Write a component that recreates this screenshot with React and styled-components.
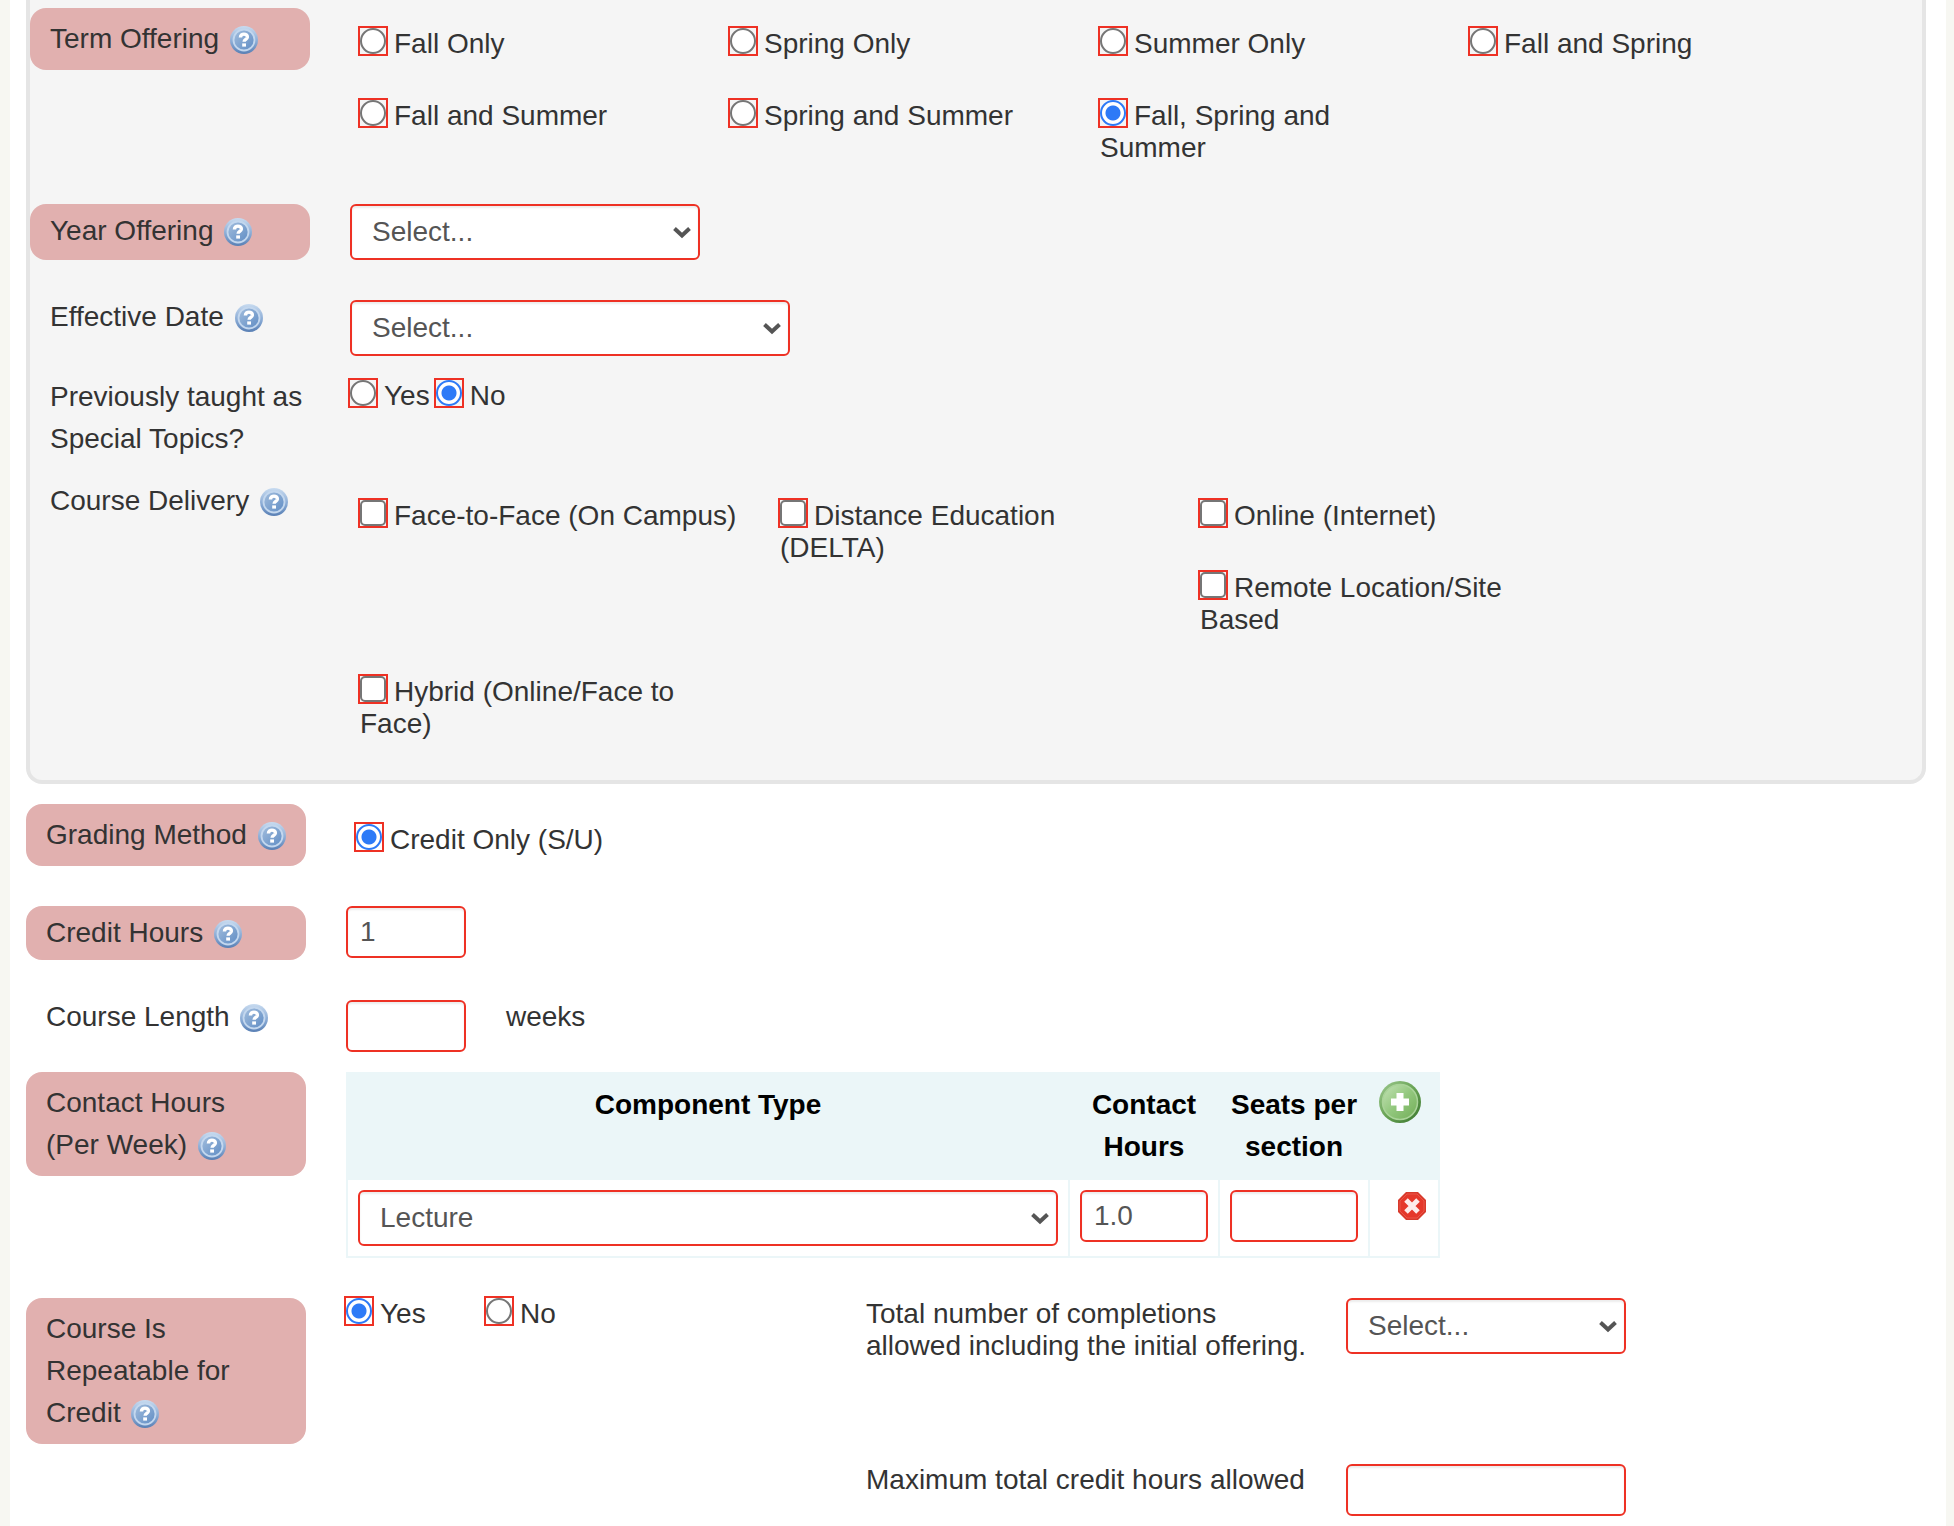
import React from 'react';
import styled, { createGlobalStyle } from 'styled-components';

const GlobalStyle = createGlobalStyle`
  *,
  *::before {
    box-sizing: border-box;
  }

  body {
    margin: 0;
    background: #f7f7f2;
    color: #333;
    font-family: 'Liberation Sans', Arial, sans-serif;
    font-size: 28px;
    line-height: 42px;
  }

  input,
  select,
  button {
    font: inherit;
  }
`;

const Page = styled.main`
  min-height: 100vh;
  margin: 0 8px 0 10px;
  padding: 0 20px 10px 16px;
  background: #fff;
`;

const Panel = styled.section`
  padding-top: 8px;
  border: 4px solid #e5e5e5;
  border-top: none;
  border-radius: 0 0 16px 16px;
  background: #f5f5f5;
`;

const Row = styled.div`
  display: grid;
  grid-template-columns: 280px 1fr;
  column-gap: 40px;
  align-items: start;
  margin-top: ${({ $gap = 0 }) => $gap}px;
`;

const Caption = styled.div`
  padding: 0 0 0 20px;
`;

const RequiredCaption = styled(Caption)`
  align-self: ${({ $compact }) => ($compact ? 'stretch' : 'start')};
  padding-top: ${({ $compact }) => ($compact ? 6 : 10)}px;
  padding-bottom: ${({ $compact }) => ($compact ? 6 : 10)}px;
  border-radius: 16px;
  background: #e1b0af;
`;

const IconButton = styled.button`
  padding: 0;
  border: none;
  background: none;
  line-height: 0;
  cursor: pointer;

  svg {
    display: block;
  }
`;

const HelpButton = styled(IconButton)`
  display: inline-block;
  margin-left: 1px;
  vertical-align: -8px;
`;

// the red frame hangs 2px outside the control, so text lines up with the control itself
const Tick = styled.input`
  appearance: none;
  width: 30px;
  height: 30px;
  margin: -2px 6px -2px -2px;
  padding: 0;
  border: 2px solid #ee3124;
  vertical-align: top;

  &::before {
    content: '';
    display: block;
    width: 26px;
    height: 26px;
    border: 2px solid #767676;
    border-radius: ${({ type }) => (type === 'radio' ? '50%' : '5px')};
    background: #fff;
  }

  &[type='radio']:checked::before {
    border-color: #2d7af7;
    background: radial-gradient(circle, #2d7af7 0 7px, #fff 8px);
  }
`;

const Options = styled.div`
  display: grid;
  grid-template-columns: repeat(${({ $columns }) => $columns}, ${({ $width }) => $width}px);
  column-gap: ${({ $gap }) => $gap}px;
  padding: 20px 0 0 10px;
`;

const Option = styled.label`
  display: block;
  padding-bottom: 40px;
  line-height: 32px;
`;

const InlineOptions = styled.div`
  display: flex;
  gap: 6px;
  padding-top: 4px;
  line-height: 32px;
`;

const SpacedOptions = styled.div`
  display: grid;
  grid-template-columns: 140px 140px;
  line-height: 32px;
`;

const Control = styled.div`
  display: flex;
  gap: 40px;
  padding-top: ${({ $top = 0 }) => $top}px;
`;

const TextInput = styled.input`
  display: block;
  width: ${({ $width }) => $width};
  height: 52px;
  padding: 0 12px;
  border: 2px solid #ee3124;
  border-radius: 6px;
  outline: none;
  background: #fff;
  box-shadow: inset 0 2px 2px rgba(0, 0, 0, 0.075);
  color: #555;
`;

const SelectWrap = styled.div`
  position: relative;
  width: ${({ $width }) => $width};

  svg {
    position: absolute;
    top: 22px;
    right: 9px;
    pointer-events: none;
  }
`;

const SelectBox = styled.select`
  appearance: none;
  display: block;
  width: 100%;
  height: 56px;
  padding: 0 40px 0 20px;
  border: 2px solid #ee3124;
  border-radius: 6px;
  outline: none;
  background: #fff;
  box-shadow: inset 0 2px 2px rgba(0, 0, 0, 0.075);
  color: #555;
`;

const ComponentTable = styled.table`
  width: 100%;
  max-width: 1094px;
  table-layout: fixed;
  border-collapse: separate;
  border-spacing: 0;
  border-left: 2px solid #ebf6f8;

  th {
    padding: 12px 10px;
    border-right: 2px solid #ebf6f8;
    background: #ebf6f8;
    color: #000;
    font-weight: bold;
    text-align: center;
    vertical-align: top;
  }

  td {
    height: 78px;
    padding: 10px;
    border-right: 2px solid #ebf6f8;
    border-bottom: 2px solid #ebf6f8;
    vertical-align: top;
  }
`;

const NumberColumn = styled.col`
  width: 150px;
`;

const ActionColumn = styled.col`
  width: 70px;
`;

const AddCell = styled.th`
  && {
    padding: 8px;
    text-align: left;
  }
`;

const DeleteButton = styled(IconButton)`
  display: block;
  margin-left: auto;
`;

const RepeatFields = styled.div`
  display: grid;
  grid-column: 2;
  grid-template-columns: 480px 440px 280px;
  column-gap: 40px;
  align-items: start;
`;

const RepeatLabel = styled.label`
  grid-column: 2;
  line-height: 32px;
`;

function HelpIcon() {
  return (
    <svg width="32" height="32" viewBox="0 0 32 32" aria-hidden="true">
      <defs>
        <linearGradient id="helpRing" x1="0" y1="0" x2="0" y2="1">
          <stop offset="0" stopColor="#c8dbf0" />
          <stop offset="0.6" stopColor="#86a8d3" />
          <stop offset="1" stopColor="#587fb4" />
        </linearGradient>
        <linearGradient id="helpFill" x1="0" y1="0" x2="1" y2="1">
          <stop offset="0" stopColor="#a3bedd" />
          <stop offset="1" stopColor="#5f8cc4" />
        </linearGradient>
      </defs>
      <circle cx="16" cy="16" r="14" fill="url(#helpRing)" />
      <circle cx="16" cy="16" r="10.5" fill="url(#helpFill)" stroke="#c3d7ee" strokeWidth="1.8" />
      <path d="M12.4 13.4c0-4.4 7.2-4.2 7-.2-.2 2.3-3.3 2.2-3.3 4.6" fill="none" stroke="#fff" strokeWidth="3.4" />
      <rect x="14.2" y="19.4" width="3.8" height="3.2" fill="#fff" />
    </svg>
  );
}

function AddIcon() {
  return (
    <svg width="44" height="44" viewBox="0 0 44 44" aria-hidden="true">
      <defs>
        <linearGradient id="addRing" x1="0" y1="0" x2="1" y2="1">
          <stop offset="0" stopColor="#9fca91" />
          <stop offset="0.5" stopColor="#68a354" />
          <stop offset="1" stopColor="#39752d" />
        </linearGradient>
        <linearGradient id="addFill" x1="0" y1="0" x2="1" y2="1">
          <stop offset="0" stopColor="#c5e3b7" />
          <stop offset="0.5" stopColor="#92c77d" />
          <stop offset="1" stopColor="#72ad57" />
        </linearGradient>
      </defs>
      <circle cx="22" cy="22" r="21" fill="url(#addRing)" />
      <circle cx="22" cy="22" r="17.5" fill="url(#addFill)" stroke="#a9d398" strokeWidth="1.5" />
      <path d="M22 13v18M13 22h18" stroke="#fff" strokeWidth="7" />
    </svg>
  );
}

function DeleteIcon() {
  return (
    <svg width="32" height="32" viewBox="0 0 32 32" aria-hidden="true">
      <path d="M10 2h12l8 8v12l-8 8H10l-8-8V10z" fill="#d83a2c" />
      <path d="M11 4h10l7 7v10l-7 7H11l-7-7V11z" fill="#e5382b" stroke="#ea5548" />
      <path d="M10 10l12 12M22 10L10 22" stroke="#fdeceb" strokeWidth="5" />
    </svg>
  );
}

function Help({ topic }) {
  return (
    <HelpButton type="button" aria-label={`Help: ${topic}`}>
      <HelpIcon />
    </HelpButton>
  );
}

function Select({ id, width, options, label }) {
  return (
    <SelectWrap $width={width}>
      <SelectBox id={id} aria-label={label}>
        {options.map((option) => (
          <option key={option}>{option}</option>
        ))}
      </SelectBox>
      <svg width="18" height="14" viewBox="0 0 18 14" aria-hidden="true">
        <path d="M1.5 2.5L9 9.5l7.5-7" fill="none" stroke="#555" strokeWidth="4" />
      </svg>
    </SelectWrap>
  );
}

const terms = [
  'Fall Only',
  'Spring Only',
  'Summer Only',
  'Fall and Spring',
  'Fall and Summer',
  'Spring and Summer',
  'Fall, Spring and Summer',
];

// each entry is one cell of the delivery grid
const deliveries = [
  ['Face-to-Face (On Campus)'],
  ['Distance Education (DELTA)'],
  ['Online (Internet)', 'Remote Location/Site Based'],
  ['Hybrid (Online/Face to Face)'],
];

export default function App() {
  return (
    <>
      <GlobalStyle />
      <Page>
        <Panel>
          <Row>
            <RequiredCaption>
              <span id="term-label">Term Offering</span> <Help topic="Term Offering" />
            </RequiredCaption>
            <Options $columns={4} $width={320} $gap={50} role="radiogroup" aria-labelledby="term-label">
              {terms.map((term) => (
                <Option key={term}>
                  <Tick type="radio" name="term" defaultChecked={term === 'Fall, Spring and Summer'} />
                  {term}
                </Option>
              ))}
            </Options>
          </Row>
          <Row>
            <RequiredCaption $compact>
              <label htmlFor="year">Year Offering</label> <Help topic="Year Offering" />
            </RequiredCaption>
            <Select id="year" width="350px" options={['Select...']} />
          </Row>
          <Row $gap={36}>
            <Caption>
              <label htmlFor="effective">Effective Date</label> <Help topic="Effective Date" />
            </Caption>
            <Control $top={4}>
              <Select id="effective" width="440px" options={['Select...']} />
            </Control>
          </Row>
          <Row $gap={20}>
            <Caption id="topics-label">Previously taught as Special Topics?</Caption>
            <InlineOptions role="radiogroup" aria-labelledby="topics-label">
              <label>
                <Tick type="radio" name="topics" />
                Yes
              </label>
              <label>
                <Tick type="radio" name="topics" defaultChecked />
                No
              </label>
            </InlineOptions>
          </Row>
          <Row $gap={20}>
            <Caption>
              <span id="delivery-label">Course Delivery</span> <Help topic="Course Delivery" />
            </Caption>
            <Options $columns={3} $width={380} $gap={40} role="group" aria-labelledby="delivery-label">
              {deliveries.map((cell) => (
                <div key={cell[0]}>
                  {cell.map((name) => (
                    <Option key={name}>
                      <Tick type="checkbox" name="delivery" />
                      {name}
                    </Option>
                  ))}
                </div>
              ))}
            </Options>
          </Row>
        </Panel>

        <Row $gap={20}>
          <RequiredCaption>
            <span id="grading-label">Grading Method</span> <Help topic="Grading Method" />
          </RequiredCaption>
          <Options $columns={1} $width={380} $gap={0} role="radiogroup" aria-labelledby="grading-label">
            <Option>
              <Tick type="radio" name="grading" defaultChecked />
              Credit Only (S/U)
            </Option>
          </Options>
        </Row>
        <Row $gap={10}>
          <RequiredCaption $compact>
            <label htmlFor="credit-hours">Credit Hours</label> <Help topic="Credit Hours" />
          </RequiredCaption>
          <TextInput id="credit-hours" $width="120px" defaultValue="1" />
        </Row>
        <Row $gap={36}>
          <Caption>
            <label htmlFor="length">Course Length</label> <Help topic="Course Length" />
          </Caption>
          <Control>
            <Control $top={4}>
              <TextInput id="length" $width="120px" />
            </Control>
            <span>weeks</span>
          </Control>
        </Row>
        <Row $gap={20}>
          <RequiredCaption>
            Contact Hours
            <br />
            (Per Week) <Help topic="Contact Hours" />
          </RequiredCaption>
          <ComponentTable>
            <colgroup>
              <col />
              <NumberColumn />
              <NumberColumn />
              <ActionColumn />
            </colgroup>
            <thead>
              <tr>
                <th scope="col">Component Type</th>
                <th scope="col">Contact Hours</th>
                <th scope="col">Seats per section</th>
                <AddCell>
                  <IconButton type="button" aria-label="Add component">
                    <AddIcon />
                  </IconButton>
                </AddCell>
              </tr>
            </thead>
            <tbody>
              <tr>
                <td>
                  <Select width="100%" options={['Lecture']} label="Component Type" />
                </td>
                <td>
                  <TextInput $width="100%" defaultValue="1.0" aria-label="Contact Hours" />
                </td>
                <td>
                  <TextInput $width="100%" aria-label="Seats per section" />
                </td>
                <td>
                  <DeleteButton type="button" aria-label="Delete component">
                    <DeleteIcon />
                  </DeleteButton>
                </td>
              </tr>
            </tbody>
          </ComponentTable>
        </Row>
        <Row $gap={40}>
          <RequiredCaption>
            <span id="repeat-label">Course Is Repeatable for Credit</span> <Help topic="Course Is Repeatable" />
          </RequiredCaption>
          <RepeatFields>
            <SpacedOptions role="radiogroup" aria-labelledby="repeat-label">
              <label>
                <Tick type="radio" name="repeat" defaultChecked />
                Yes
              </label>
              <label>
                <Tick type="radio" name="repeat" />
                No
              </label>
            </SpacedOptions>
            <RepeatLabel htmlFor="completions">
              Total number of completions allowed including the initial offering.
            </RepeatLabel>
            <Select id="completions" width="280px" options={['Select...']} />
          </RepeatFields>
        </Row>
        <Row $gap={20}>
          <RepeatFields>
            <RepeatLabel htmlFor="max-hours">Maximum total credit hours allowed</RepeatLabel>
            <TextInput id="max-hours" $width="280px" />
          </RepeatFields>
        </Row>
      </Page>
    </>
  );
}
